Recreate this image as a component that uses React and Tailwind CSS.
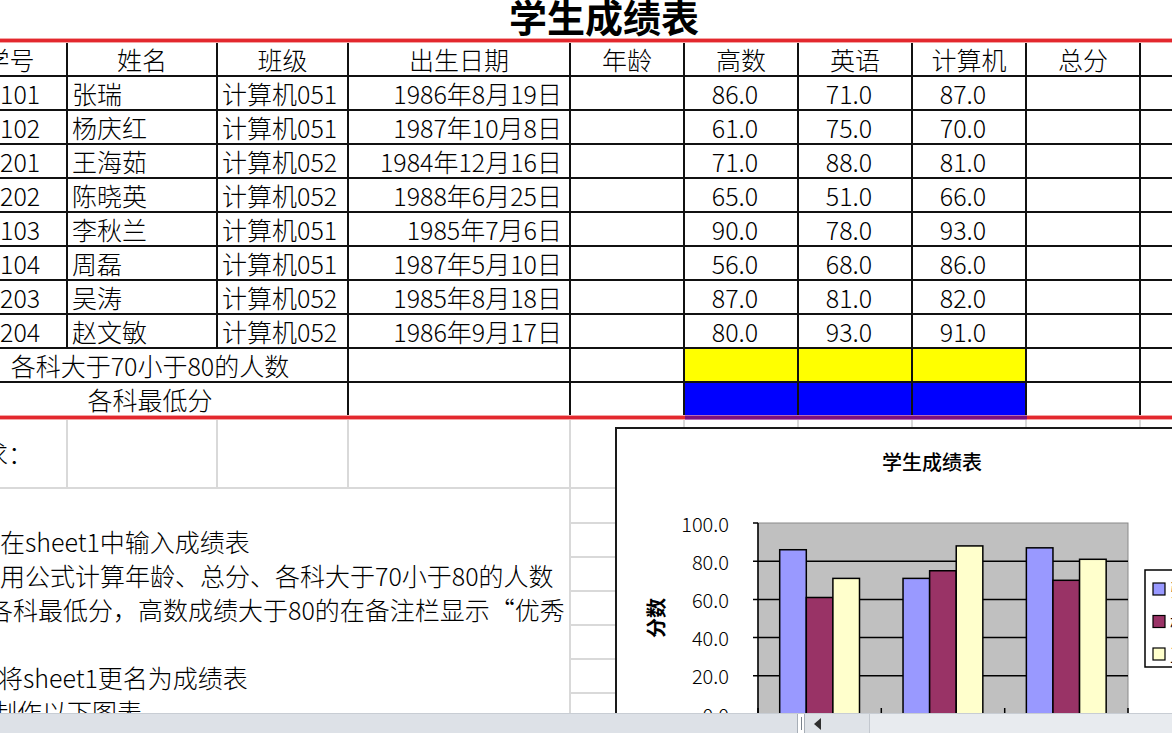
import React from 'react';

const COLS = ['w-[115px]', 'w-[150px]', 'w-[131px]', 'w-[222px]', 'w-[114px]', 'w-[114px]', 'w-[114px]', 'w-[114px]', 'w-[114px]', 'w-[114px]'];

const students = [
  ['101', '张瑞', '计算机051', '1986年8月19日', '86.0', '71.0', '87.0'],
  ['102', '杨庆红', '计算机051', '1987年10月8日', '61.0', '75.0', '70.0'],
  ['201', '王海茹', '计算机052', '1984年12月16日', '71.0', '88.0', '81.0'],
  ['202', '陈晓英', '计算机052', '1988年6月25日', '65.0', '51.0', '66.0'],
  ['103', '李秋兰', '计算机051', '1985年7月6日', '90.0', '78.0', '93.0'],
  ['104', '周磊', '计算机051', '1987年5月10日', '56.0', '68.0', '86.0'],
  ['203', '吴涛', '计算机052', '1985年8月18日', '87.0', '81.0', '82.0'],
  ['204', '赵文敏', '计算机052', '1986年9月17日', '80.0', '93.0', '91.0'],
];

const headers = ['学号', '姓名', '班级', '出生日期', '年龄', '高数', '英语', '计算机', '总分', ''];

const cell = 'shrink-0 h-full border-r-2 border-[#111] leading-[32px] whitespace-nowrap';
const grayCell = 'shrink-0 h-full border-r-2 border-[#d9d9d9]';

function RedLine() {
  return <div className="h-[5px] border-y border-[#f4a4a4] bg-[#e3282e]" />;
}

function Chart() {
  // 高数 / 英语 / 计算机 for 张瑞, 杨庆红, 王海茹
  const groups = [[86, 61, 71], [71, 75, 88], [87, 70, 81]];
  const colors = ['#9999ff', '#993366', '#ffffcc'];
  const base = 287;
  const k = 1.91;
  const ticks = [100, 80, 60, 40, 20, 0];

  return (
    <div className="absolute left-[615px] top-[427px] w-[600px] h-[330px] bg-white border-2 border-[#1a1a1a]">
      <svg className="absolute -left-[2px] -top-[2px] overflow-visible" width="600" height="330" style={{ fontFamily: '"Noto Sans CJK SC", sans-serif' }}>
        <text x="317" y="34" fontSize="20" fontWeight="500" textAnchor="middle" dominantBaseline="central">学生成绩表</text>
        <text transform="translate(40 191) rotate(-90)" fontSize="20" fontWeight="600" textAnchor="middle" dominantBaseline="central">分数</text>

        <rect x="143" y="96" width="370" height="191" fill="#c0c0c0" stroke="#8a8a8a" strokeWidth="1" />
        {ticks.map((t) => (
          <g key={t}>
            <text x="114" y={base - t * k} fontSize="20" fontWeight="300" textAnchor="end" dominantBaseline="central">{t.toFixed(1)}</text>
            <line x1="138" x2={t === 0 || t === 100 ? 143 : 513} y1={base - t * k} y2={base - t * k} stroke="#000" strokeWidth="1.5" />
          </g>
        ))}
        <line x1="143" x2="143" y1="96" y2="287" stroke="#000" strokeWidth="1.5" />
        <line x1="143" x2="513" y1="287" y2="287" stroke="#000" strokeWidth="1.5" />
        {[143, 266.3, 389.7, 513].map((x) => (
          <line key={x} x1={x} x2={x} y1="281" y2="293" stroke="#000" strokeWidth="1.5" />
        ))}

        {groups.map((vals, g) =>
          vals.map((v, j) => (
            <rect
              key={`${g}-${j}`}
              x={143 + 123.33 * g + 21.7 + 26.6 * j}
              y={base - v * k}
              width="26.6"
              height={v * k}
              fill={colors[j]}
              stroke="#000"
              strokeWidth="1.5"
            />
          ))
        )}

        <rect x="530" y="143" width="100" height="97" fill="#fff" stroke="#000" strokeWidth="1.5" />
        {['张瑞', '杨庆红', '王海茹'].map((name, i) => (
          <g key={name}>
            <rect x="538" y={156 + i * 32.5} width="12" height="12" fill={colors[i]} stroke="#000" strokeWidth="1.2" />
            <text x="555" y={162 + i * 32.5} fontSize="18" dominantBaseline="central">{name}</text>
          </g>
        ))}
      </svg>
    </div>
  );
}

export default function App() {
  return (
    <div className="w-[1172px] h-[733px] overflow-hidden bg-white flex flex-col text-black font-['Noto_Sans_CJK_SC',sans-serif]">
      <div className="relative h-[713px] overflow-hidden">
        <div className="-ml-[47px] w-[1302px] text-[25px] font-light">
          <div className="h-[38px] pt-[1px] text-center text-[38px] font-bold leading-[30px]">学生成绩表</div>
          <RedLine />

          <div className="flex h-[34px] border-b-2 border-[#111]">
            {headers.map((h, i) => (
              <div key={i} className={`${COLS[i]} ${cell} text-center`}>{h}</div>
            ))}
          </div>

          {students.map((s) => (
            <div key={s[0]} className="flex h-[34px] border-b-2 border-[#111]">
              <div className={`${COLS[0]} ${cell} pl-[47px]`}>{s[0]}</div>
              <div className={`${COLS[1]} ${cell} pl-[4px]`}>{s[1]}</div>
              <div className={`${COLS[2]} ${cell} pl-[4px]`}>{s[2]}</div>
              <div className={`${COLS[3]} ${cell} text-right pr-[7px]`}>{s[3]}</div>
              <div className={`${COLS[4]} ${cell}`} />
              <div className={`${COLS[5]} ${cell} text-center pr-[12px]`}>{s[4]}</div>
              <div className={`${COLS[6]} ${cell} text-center pr-[12px]`}>{s[5]}</div>
              <div className={`${COLS[7]} ${cell} text-center pr-[12px]`}>{s[6]}</div>
              <div className={`${COLS[8]} ${cell}`} />
              <div className={`${COLS[9]} ${cell}`} />
            </div>
          ))}

          <div className="flex h-[34px] border-b-2 border-[#111]">
            <div className={`w-[396px] ${cell} text-center`}>各科大于70小于80的人数</div>
            <div className={`${COLS[3]} ${cell}`} />
            <div className={`${COLS[4]} ${cell}`} />
            <div className={`${COLS[5]} ${cell} bg-[#ffff00]`} />
            <div className={`${COLS[6]} ${cell} bg-[#ffff00]`} />
            <div className={`${COLS[7]} ${cell} bg-[#ffff00]`} />
            <div className={`${COLS[8]} ${cell}`} />
            <div className={`${COLS[9]} ${cell}`} />
          </div>

          <div className="flex h-[32px]">
            <div className={`w-[396px] ${cell} text-center`}>各科最低分</div>
            <div className={`${COLS[3]} ${cell}`} />
            <div className={`${COLS[4]} ${cell}`} />
            <div className={`${COLS[5]} ${cell} bg-[#0000ff]`} />
            <div className={`${COLS[6]} ${cell} bg-[#0000ff]`} />
            <div className={`${COLS[7]} ${cell} bg-[#0000ff]`} />
            <div className={`${COLS[8]} ${cell}`} />
            <div className={`${COLS[9]} ${cell}`} />
          </div>

          <div className="flex h-[5px]">
            <div className="w-[732px] border-y border-[#f4a4a4] bg-[#e3282e]" />
            <div className="w-[342px] border-y border-[#b46ab4] bg-[#7d0f7d]" />
            <div className="flex-1 border-y border-[#f4a4a4] bg-[#e3282e]" />
          </div>

          <div className="flex h-[69px] border-b-2 border-[#d9d9d9]">
            <div className={`${COLS[0]} ${grayCell} flex items-center pl-[5px] whitespace-nowrap`}>要求：</div>
            {COLS.slice(1).map((w, i) => (
              <div key={i} className={`${w} ${grayCell}`} />
            ))}
          </div>

          <div className="flex">
            <div className="w-[618px] h-[240px] shrink-0 border-r-2 border-[#d9d9d9] overflow-hidden pt-[35px] leading-[34px] whitespace-nowrap">
              <div className="h-[34px] ml-[47px]">在sheet1中输入成绩表</div>
              <div className="h-[34px] ml-[47px]">用公式计算年龄、总分、各科大于70小于80的人数</div>
              <div className="h-[34px] ml-[35px]">各科最低分，高数成绩大于80的在备注栏显示“优秀</div>
              <div className="h-[34px]" />
              <div className="h-[34px] ml-[45px]">将sheet1更名为成绩表</div>
              <div className="h-[34px] ml-[39px]">制作以下图表</div>
            </div>
            <div className="flex flex-col">
              {['h-[35px]', 'h-[34px]', 'h-[34px]', 'h-[34px]', 'h-[34px]', 'h-[34px]', 'h-[34px]'].map((h, r) => (
                <div key={r} className={`flex ${h} border-b-2 border-[#d9d9d9]`}>
                  {COLS.slice(4).map((w, i) => (
                    <div key={i} className={`${w} ${grayCell}`} />
                  ))}
                </div>
              ))}
            </div>
          </div>
        </div>

        <Chart />
      </div>

      <div className="h-[20px] flex border-t border-[#c8cdd4]">
        <div className="w-[797px] bg-[#dde1e7]" />
        <div className="w-[8px] bg-white border-x border-[#a7aeb7] flex justify-center py-[3px]">
          <div className="w-px bg-[#7a828c]" />
        </div>
        <div className="w-[64px] bg-[#dfe3e8] flex items-center pl-[9px]">
          <div className="w-0 h-0 border-y-[6px] border-y-transparent border-r-[7px] border-r-[#2f2f2f]" />
        </div>
        <div className="flex-1 bg-[#e8ebef] border-l border-[#c3c8cf]" />
      </div>
    </div>
  );
}
